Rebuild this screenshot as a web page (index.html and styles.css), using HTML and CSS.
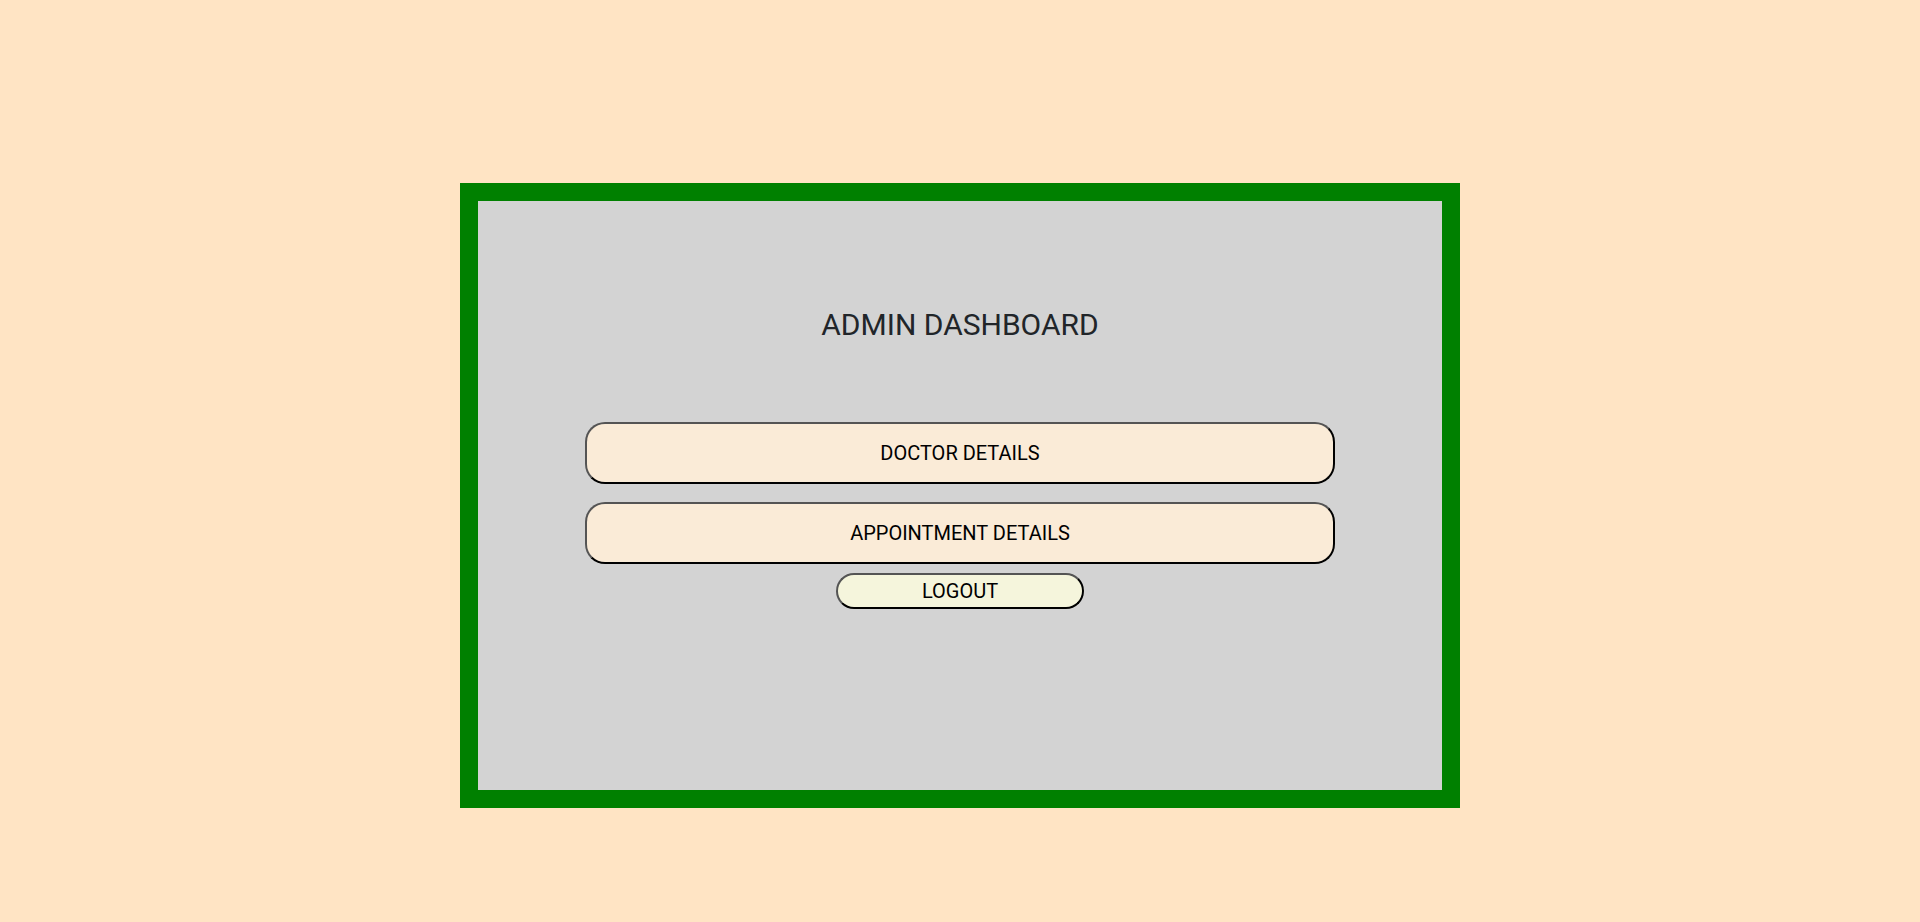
FILE: index.html
```html
<!DOCTYPE html>
<html lang="en">
<head>
<meta charset="utf-8">
<title>Admin Dashboard</title>
<link rel="stylesheet" href="styles.css">
</head>
<body>
<div class="panel">
  <h2 class="title">ADMIN DASHBOARD</h2>
  <div class="actions">
    <button class="btn-main">DOCTOR DETAILS</button>
    <button class="btn-main">APPOINTMENT DETAILS</button>
    <button class="btn-logout">LOGOUT</button>
  </div>
</div>
</body>
</html>
```
FILE: styles.css
```css
html, body {
  margin: 0;
  padding: 0;
}
body {
  background: #ffe4c4;
  font-family: Roboto, "Liberation Sans", sans-serif;
  color: #212529;
}
.panel {
  box-sizing: border-box;
  width: 1000px;
  height: 625px;
  margin: 183px auto 0;
  border: 18px solid #008000;
  background: #d3d3d3;
  display: flex;
  flex-direction: column;
  align-items: center;
}
.title {
  margin: 106px 0 0;
  font-size: 30px;
  font-weight: 400;
  line-height: 1.2;
  text-align: center;
}
.actions {
  margin-top: 79px;
  display: flex;
  flex-direction: column;
  align-items: center;
}
.btn-main,
.btn-logout {
  box-sizing: border-box;
  font-family: Roboto, "Liberation Sans", sans-serif;
  color: #000;
  border-width: 2px;
  border-style: solid;
  border-color: #545454 #000 #000 #545454;
  padding: 0;
  cursor: pointer;
}
.btn-main {
  width: 750px;
  height: 62px;
  border-radius: 20px;
  background: #faebd7;
  font-size: 20px;
  margin-bottom: 18px;
}
.btn-main:nth-child(2) {
  margin-bottom: 9px;
}
.btn-logout {
  width: 248px;
  height: 36px;
  border-radius: 18px;
  background: #f5f5dc;
  font-size: 20px;
}
```
